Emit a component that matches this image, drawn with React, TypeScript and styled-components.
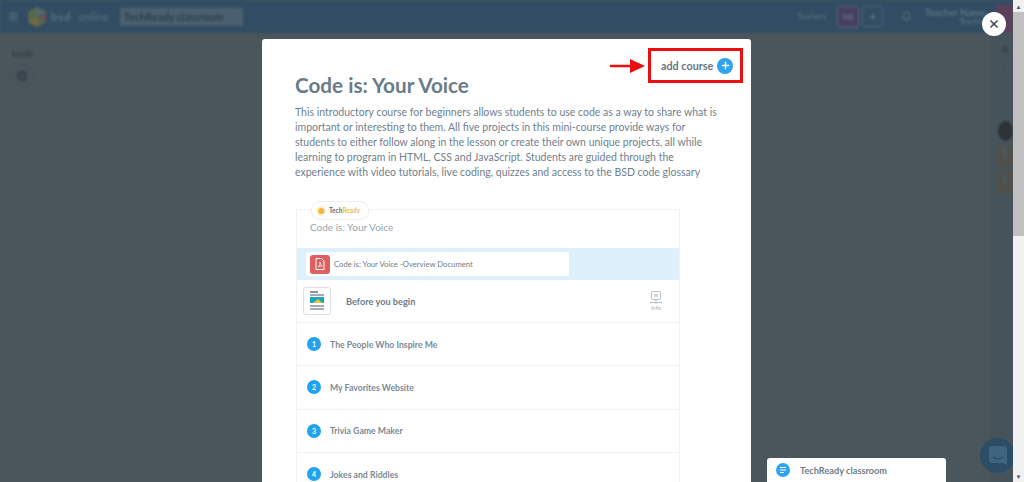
import React from "react";
import styled, { createGlobalStyle } from "styled-components";
import { Bell, Database, Menu, Plus, X } from "lucide-react";

const font = `"Lato", "Noto Sans", sans-serif`;

const GlobalStyle = createGlobalStyle`
  html, body {
    margin: 0;
    height: 100%;
    overflow: hidden;
    font-family: ${font};
  }
`;

const Page = styled.div`
  position: relative;
  display: grid;
  grid-template-columns: 1fr 11px;
  width: 1024px;
  height: 482px;
  overflow: hidden;
`;

const Shell = styled.div`
  position: relative;
  display: flex;
  flex-direction: column;
  background: #4a555c;
  min-width: 0;
  overflow: hidden;
`;

const TopBar = styled.header`
  display: flex;
  align-items: center;
  height: 33px;
  padding-left: 8px;
  background: #324d63;
  color: #5f7688;
  filter: blur(0.8px);
`;

const LogoText = styled.span`
  margin-left: 5px;
  font-size: 11px;
  font-weight: 700;
  letter-spacing: 1px;
  color: #566e80;
`;

const LogoTextLight = styled(LogoText)`
  margin-left: 7px;
  font-weight: 400;
  letter-spacing: 0.2px;
`;

const ClassInput = styled.div`
  display: flex;
  align-items: center;
  width: 123px;
  height: 18px;
  margin-left: 11px;
  padding-left: 4px;
  box-sizing: border-box;
  background: #4a5f6f;
  color: #2e3f4c;
  font-size: 10.5px;
  font-weight: 700;
`;

const Spacer = styled.div`
  flex: 1;
`;

const TeachersLabel = styled.span`
  font-size: 7.5px;
  color: #5b7284;
  margin-right: 11px;
`;

const TeacherTile = styled.div`
  display: flex;
  align-items: center;
  justify-content: center;
  width: 20px;
  height: 20px;
  border-radius: 3px;
  border: 1px solid #5a6472;
  background: #45405f;
  color: #6a6a86;
  font-size: 7px;
  font-weight: 700;
`;

const AddTile = styled.div`
  display: flex;
  align-items: center;
  justify-content: center;
  width: 19px;
  height: 19px;
  margin-left: 3px;
  border: 1px dashed #5a7284;
  border-radius: 3px;
`;

const BellWrap = styled.div`
  display: flex;
  margin: 0 13px 0 18px;
`;

const Person = styled.div`
  display: flex;
  flex-direction: column;
  align-items: flex-end;
  width: 60px;
  line-height: 1;
`;

const PersonName = styled.span`
  font-size: 9.5px;
  font-weight: 700;
  white-space: nowrap;
  color: #5b7284;
`;

const PersonRole = styled.span`
  font-size: 7.5px;
  color: #5b7284;
  margin-top: 1px;
`;

const PersonAvatar = styled.div`
  width: 17px;
  height: 28px;
  margin-left: 11px;
  background: #5a4058;
  align-self: flex-end;
`;

const Workspace = styled.div`
  display: flex;
  flex: 1;
  justify-content: space-between;
  filter: blur(0.8px);
`;

const ToolsColumn = styled.div`
  display: flex;
  flex-direction: column;
  align-items: flex-start;
  padding: 15px 0 0 12px;
`;

const ToolsLabel = styled.span`
  font-size: 9.5px;
  font-weight: 700;
  color: #343f46;
`;

const ToolButton = styled.div`
  display: flex;
  align-items: center;
  justify-content: center;
  width: 24px;
  height: 24px;
  margin: 5px 0 0 -2px;
  border: 1px solid #465158;
  border-radius: 50%;
  color: #2f3a41;
  box-sizing: border-box;
`;

const StudentsColumn = styled.div`
  display: flex;
  flex-direction: column;
  align-items: center;
  gap: 5px;
  width: 23px;
  padding: 10px 0 0 7px;
  box-sizing: border-box;
  background: #47535a;
  overflow: hidden;
`;

const StudentCount = styled.span`
  font-size: 12px;
  font-weight: 700;
  line-height: 12px;
  color: #333e45;
`;

const StudentsLabel = styled.span`
  writing-mode: vertical-rl;
  font-size: 8px;
  line-height: 10px;
  color: #3f5260;
`;

const StudentTile = styled.div`
  flex-shrink: 0;
  width: 17px;
  height: 21px;
  padding-left: 5px;
  box-sizing: border-box;
  background: #4f504a;
  color: #4a6070;
  font-size: 11px;
  font-weight: 700;
`;

const StudentFace = styled.div`
  flex-shrink: 0;
  width: 15px;
  height: 20px;
  margin-top: 26px;
  border-radius: 50%;
  background: #2d3338;
`;

const Scrollbar = styled.div`
  display: flex;
  flex-direction: column;
  background: #f1f1f1;
`;

const ScrollArrow = styled.div`
  height: 12px;
  display: flex;
  justify-content: center;
  align-items: center;
  color: #505050;
  font-size: 6px;
`;

const ScrollThumb = styled.div`
  height: 224px;
  background: #c1c1c1;
`;

const ScrollRest = styled.div`
  flex: 1;
`;

const Modal = styled.section`
  position: absolute;
  top: 39px;
  left: 262px;
  width: 489px;
  height: 443px;
  padding: 34px 33px 0;
  box-sizing: border-box;
  background: #fff;
  border-radius: 3px 3px 0 0;
  color: #6a7b8a;
  overflow: hidden;
`;

const Title = styled.h1`
  margin: 0;
  font-size: 20.7px;
  line-height: 24px;
  font-weight: 700;
  color: #6a7b8a;
`;

const Intro = styled.p`
  margin: 8px 0 0;
  font-size: 10.5px;
  line-height: 15px;
  white-space: nowrap;
  color: #6f808e;
`;

const CourseCard = styled.div`
  position: relative;
  width: 384px;
  margin: 29px 0 0 1px;
  box-sizing: border-box;
  border: 1px solid #f0f2f4;
  border-bottom: 0;
`;

const Badge = styled.div`
  position: absolute;
  top: -9px;
  left: 14px;
  display: flex;
  align-items: center;
  gap: 3px;
  height: 17px;
  padding: 0 8px 0 4px;
  background: #fff;
  border: 1px solid #eee;
  border-radius: 9px;
  font-size: 6.5px;
  font-weight: 700;
  color: #6b6b6b;
`;

const BadgeDot = styled.span`
  width: 10px;
  height: 10px;
  border-radius: 50%;
  background: #fdf0cf;
  color: #f2b632;
  font-size: 8px;
  line-height: 10px;
  text-align: center;
`;

const BadgeAccent = styled.span`
  margin-left: -3px;
  color: #f3bd3e;
`;

const CardTitle = styled.div`
  height: 38px;
  padding: 9px 0 0 13px;
  box-sizing: border-box;
  font-size: 10px;
  line-height: 17px;
  color: #98a4ae;
`;

const DocRow = styled.div`
  display: flex;
  align-items: center;
  height: 32px;
  padding-left: 9px;
  background: #dff0fd;
`;

const DocBox = styled.div`
  display: flex;
  align-items: center;
  gap: 4px;
  width: 263px;
  height: 24px;
  padding-left: 4px;
  box-sizing: border-box;
  background: #fff;
  border-radius: 2px;
  font-size: 7.7px;
  color: #6f7d88;
`;

const PdfIcon = styled.div`
  display: flex;
  align-items: center;
  justify-content: center;
  width: 20px;
  height: 19px;
  background: #e0605f;
  border-radius: 3px;
`;

const IntroRow = styled.div`
  display: flex;
  align-items: center;
  height: 43px;
  padding: 0 17px 0 6px;
  box-sizing: border-box;
  border-bottom: 1px solid #f0f2f4;
  font-size: 9.2px;
  font-weight: 700;
  color: #6d7c89;
`;

const Thumb = styled.div`
  display: flex;
  align-items: center;
  justify-content: center;
  width: 28px;
  height: 28px;
  margin-right: 15px;
  box-sizing: border-box;
  border: 1px solid #dde1e5;
  border-radius: 3px;
  box-shadow: 0 0 1px #dde1e5;
`;

const InfoBlock = styled.div`
  display: flex;
  flex-direction: column;
  align-items: center;
  margin-left: auto;
  font-size: 6px;
  font-weight: 400;
  line-height: 6px;
  color: #a9b2ba;
`;

const LessonRow = styled.div`
  display: flex;
  align-items: center;
  gap: 9px;
  height: 43.3px;
  padding-left: 10px;
  box-sizing: border-box;
  border-bottom: 1px solid #f0f2f4;
  font-size: 8.7px;
  font-weight: 700;
  color: #7b8a97;
`;

const LessonNumber = styled.span`
  display: flex;
  align-items: center;
  justify-content: center;
  width: 14px;
  height: 14px;
  border-radius: 50%;
  background: #22a3ef;
  color: #fff;
  font-size: 7px;
  font-weight: 700;
`;

const Callout = styled.div`
  position: absolute;
  top: 48px;
  left: 648px;
  display: flex;
  align-items: center;
  gap: 4px;
  width: 95px;
  height: 35px;
  padding-left: 10px;
  box-sizing: border-box;
  border: 3px solid #e90f10;
  background: #fff;
  font-size: 10.8px;
  font-weight: 700;
  color: #6b7580;
`;

const PlusBadge = styled.span`
  display: flex;
  align-items: center;
  justify-content: center;
  width: 16px;
  height: 16px;
  border-radius: 50%;
  background: #2ea3ef;
  color: #fff;
`;

const Arrow = styled.svg`
  position: absolute;
  top: 59px;
  left: 610px;
`;

const CloseButton = styled.button`
  position: absolute;
  top: 12px;
  left: 982px;
  display: flex;
  align-items: center;
  justify-content: center;
  width: 24px;
  height: 24px;
  padding: 0;
  border: 0;
  border-radius: 50%;
  background: #fff;
  color: #465058;
`;

const ClassTab = styled.div`
  position: absolute;
  left: 767px;
  top: 458px;
  display: flex;
  align-items: center;
  gap: 10px;
  width: 179px;
  height: 24px;
  padding-left: 9px;
  box-sizing: border-box;
  background: #fff;
  border-radius: 3px 3px 0 0;
  font-size: 9.2px;
  font-weight: 700;
  color: #6f7c88;
`;

const TabIcon = styled.span`
  display: flex;
  align-items: center;
  justify-content: center;
  width: 14px;
  height: 14px;
  border-radius: 50%;
  background: #2ea3ef;
`;

const ChatBubble = styled.div`
  position: absolute;
  left: 980px;
  top: 438px;
  display: flex;
  align-items: center;
  justify-content: center;
  width: 35px;
  height: 35px;
  border-radius: 50%;
  background: #2c4d66;
`;

const lessons = [
  "The People Who Inspire Me",
  "My Favorites Website",
  "Trivia Game Maker",
  "Jokes and Riddles",
];

const introLines = [
  "This introductory course for beginners allows students to use code as a way to share what is",
  "important or interesting to them. All five projects in this mini-course provide ways for",
  "students to either follow along in the lesson or create their own unique projects, all while",
  "learning to program in HTML, CSS and JavaScript. Students are guided through the",
  "experience with video tutorials, live coding, quizzes and access to the BSD code glossary",
];

export default function App() {
  return (
    <Page>
      <GlobalStyle />
      <Shell>
        <TopBar>
          <Menu size={11} color="#6b8294" />
          <svg width="18" height="20" viewBox="0 0 18 20" style={{ marginLeft: 9 }}>
            <polygon points="9,0 18,5 18,15 9,20 0,15 0,5" fill="#56694f" />
            <polygon points="9,0 18,5 9,10" fill="#4f6a74" />
            <polygon points="18,5 18,15 9,10" fill="#6a4f58" />
            <polygon points="0,15 9,10 9,20" fill="#77683f" />
          </svg>
          <LogoText>bsd</LogoText>
          <LogoTextLight>online</LogoTextLight>
          <ClassInput>TechReady classroom</ClassInput>
          <Spacer />
          <TeachersLabel>Teachers</TeachersLabel>
          <TeacherTile>MR</TeacherTile>
          <AddTile>
            <Plus size={8} color="#6b8294" strokeWidth={3} />
          </AddTile>
          <BellWrap>
            <Bell size={11} color="#5f7688" />
          </BellWrap>
          <Person>
            <PersonName>Teacher Name</PersonName>
            <PersonRole>Teacher</PersonRole>
          </Person>
          <PersonAvatar />
        </TopBar>
        <Workspace>
          <ToolsColumn>
            <ToolsLabel>tools</ToolsLabel>
            <ToolButton>
              <Database size={10} strokeWidth={3} />
            </ToolButton>
          </ToolsColumn>
          <StudentsColumn>
            <StudentCount>4</StudentCount>
            <StudentsLabel>students</StudentsLabel>
            <StudentFace />
            <StudentTile>S</StudentTile>
            <StudentTile>S</StudentTile>
          </StudentsColumn>
        </Workspace>
        <ChatBubble>
          <svg width="18" height="19" viewBox="0 0 18 19">
            <path
              d="M3 0h12a3 3 0 0 1 3 3v16l-4-2H3a3 3 0 0 1-3-3V3a3 3 0 0 1 3-3z"
              fill="#3f6480"
            />
            <path d="M4 11c3 2.500 7 2.500 10 0" fill="none" stroke="#2c4d66" strokeWidth="1.200" />
          </svg>
        </ChatBubble>
      </Shell>
      <Scrollbar>
        <ScrollArrow>▲</ScrollArrow>
        <ScrollThumb />
        <ScrollRest />
        <ScrollArrow>▼</ScrollArrow>
      </Scrollbar>

      <Modal>
        <Title>Code is: Your Voice</Title>
        <Intro>
          {introLines.map((line) => (
            <React.Fragment key={line}>
              {line}
              <br />
            </React.Fragment>
          ))}
        </Intro>
        <CourseCard>
          <Badge>
            <BadgeDot>✺</BadgeDot>
            Tech<BadgeAccent>Ready</BadgeAccent>
          </Badge>
          <CardTitle>Code is: Your Voice</CardTitle>
          <DocRow>
            <DocBox>
              <PdfIcon>
                <svg width="10" height="12" viewBox="0 0 10 12" fill="none" stroke="#fff" strokeWidth="1">
                  <path d="M1 .5h5.500L9 3v8.500H1z" />
                  <path d="M3 9c1.500-1 2.500-3 2-5 0 2 1 3.500 2.500 4-1.500 0-3 .3-4.500 1z" strokeWidth=".7" />
                </svg>
              </PdfIcon>
              Code is: Your Voice -Overview Document
            </DocBox>
          </DocRow>
          <IntroRow>
            <Thumb>
              <svg width="14" height="20" viewBox="0 0 14 20">
                <rect x="0" y="0" width="8" height="2" fill="#8b949c" />
                <rect x="0" y="3" width="14" height="2" fill="#a5adb4" />
                <rect x="0" y="6" width="14" height="6" fill="#1aa6b7" />
                <polygon points="3,12 8,8 12,12" fill="#f0c23c" />
                <rect x="0" y="14" width="14" height="2" fill="#a5adb4" />
                <rect x="0" y="17" width="14" height="2" fill="#a5adb4" />
              </svg>
            </Thumb>
            Before you begin
            <InfoBlock>
              <svg width="12" height="14" viewBox="0 0 12 14" fill="none" stroke="#bcc4cb">
                <rect x="1.500" y=".5" width="9" height="8" rx="1.500" />
                <rect x="4" y="3" width="4" height="3" fill="#d4d9de" stroke="none" />
                <path d="M6 8.500V13M0 11.500h12" />
              </svg>
              info
            </InfoBlock>
          </IntroRow>
          {lessons.map((name, i) => (
            <LessonRow key={name}>
              <LessonNumber>{i + 1}</LessonNumber>
              {name}
            </LessonRow>
          ))}
        </CourseCard>
      </Modal>

      <Arrow width="36" height="14" viewBox="0 0 36 14">
        <path d="M0 7h24" stroke="#e90f10" strokeWidth="2.500" />
        <polygon points="20,0 35,7 20,14" fill="#e90f10" />
      </Arrow>
      <Callout>
        add course
        <PlusBadge>
          <Plus size={11} strokeWidth={3} />
        </PlusBadge>
      </Callout>

      <CloseButton aria-label="close">
        <X size={12} strokeWidth={3.5} />
      </CloseButton>

      <ClassTab>
        <TabIcon>
          <svg width="8" height="8" viewBox="0 0 8 8" stroke="#fff" strokeWidth="1">
            <path d="M1 1.500h6M1 4h6M1 6.500h4" />
          </svg>
        </TabIcon>
        TechReady classroom
      </ClassTab>
    </Page>
  );
}
